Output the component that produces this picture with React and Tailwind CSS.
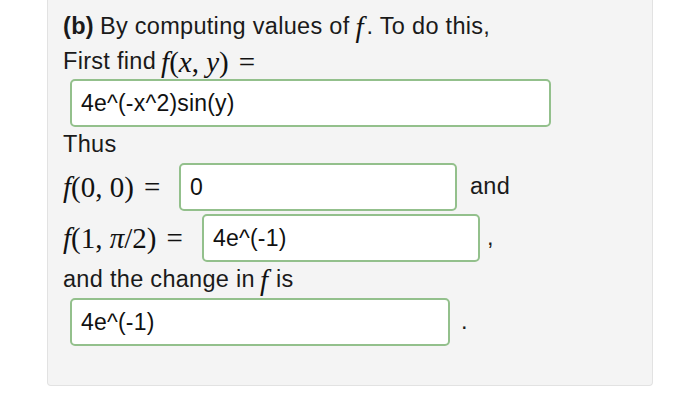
export default function App() {
  const sans = { fontFamily: '"Liberation Sans", Arial, sans-serif' };
  const math = "font-['Liberation_Serif',serif] text-[29px] leading-none text-[#111] tracking-normal";
  const inputCls =
    "h-[48px] shrink-0 rounded-[5px] border-2 border-[#93c08c] bg-white flex items-center pl-[9px] text-[23px] leading-none text-[#111] tracking-[0.2px]";

  return (
    <div className="w-[700px] h-[418px] bg-white" style={sans}>
      <div className="ml-[47px] w-[606px] h-[386px] bg-[#f4f4f4] border-x border-b border-[#e2e2e2] rounded-b-[4px] pl-[15px] pt-[11px] text-[23.5px] leading-none text-[#1a1a1a] tracking-[0.3px]">
        <div className="h-[32px] flex items-center whitespace-nowrap">
          <span className="font-bold">(b)</span>
          <span className="ml-[6px]">By computing values of</span>
          <span className={`${math} italic ml-[6px]`}>f</span>
          <span className="ml-[3px]">. To do this,</span>
        </div>
        <div className="h-[32px] mt-[3px] flex items-center whitespace-nowrap">
          <span>First find</span>
          <span className={`${math} ml-[5px]`}>
            <i>f</i>(<i>x</i>, <i>y</i>)<span className="ml-[10px]">=</span>
          </span>
        </div>
        <div className={`${inputCls} mt-[1px] ml-[7px] w-[481px]`}>4e^(-x^2)sin(y)</div>
        <div className="h-[32px] mt-[2px] flex items-center">Thus</div>
        <div className="h-[48px] flex items-center mt-[2px]">
          <span className={`${math} w-[116px] whitespace-nowrap`}>
            <i>f</i>(0, 0)<span className="ml-[10px]">=</span>
          </span>
          <div className={`${inputCls} w-[278px]`}>0</div>
          <span className="ml-[13px]">and</span>
        </div>
        <div className="h-[48px] flex items-center mt-[3px]">
          <span className={`${math} w-[139px] whitespace-nowrap`}>
            <i>f</i>(1, <i>π</i>/2)<span className="ml-[10px]">=</span>
          </span>
          <div className={`${inputCls} w-[278px]`}>4e^(-1)</div>
          <span className="ml-[7px]">,</span>
        </div>
        <div className="h-[32px] mt-[2px] flex items-center whitespace-nowrap">
          <span>and the change in</span>
          <span className={`${math} italic ml-[5px]`}>f</span>
          <span className="ml-[8px]">is</span>
        </div>
        <div className="h-[48px] flex items-center mt-[2px]">
          <div className={`${inputCls} ml-[7px] w-[380px]`}>4e^(-1)</div>
          <span className="ml-[11px]">.</span>
        </div>
      </div>
    </div>
  );
}
